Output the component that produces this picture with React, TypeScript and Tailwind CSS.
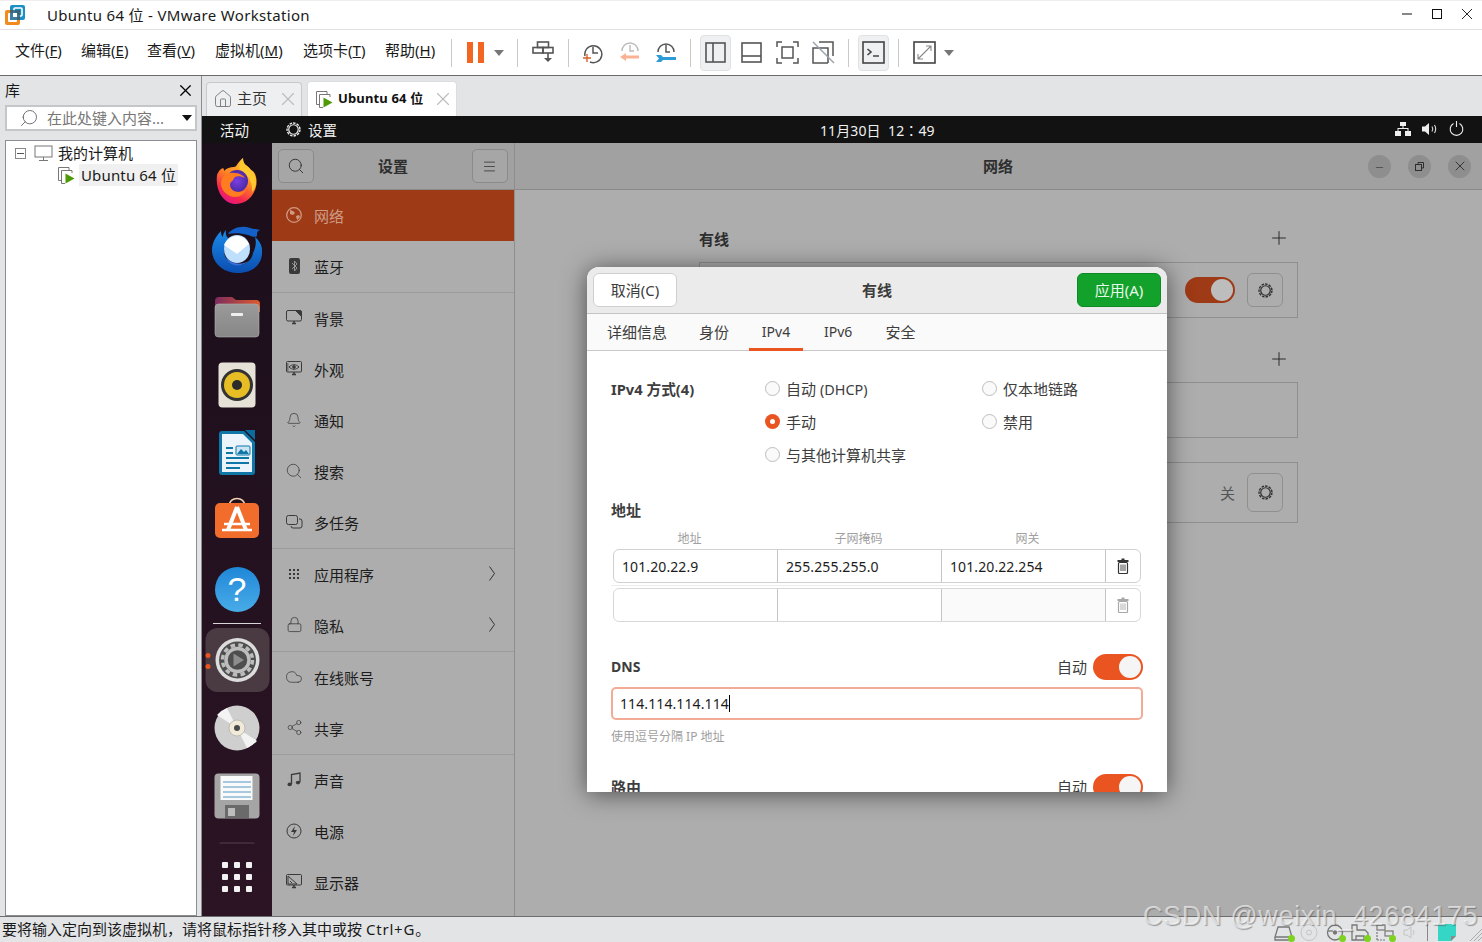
import React from "react";
import { Search, Menu, X, Plus, Bell, Lock, Cloud, Share2, Home, Minus } from "lucide-react";

const Sep = () => <div className="w-px h-7 bg-[#c9c9c9] shrink-0" />;
const Caret = ({ c = "#777" }: { c?: string }) => (
  <svg width="10" height="6" viewBox="0 0 10 6"><path d="M0 0h10L5 6z" fill={c} /></svg>
);

const S = "#555";
const VmIcon = () => (
  <svg width="19" height="19" viewBox="0 0 19 19" fill="none" className="shrink-0">
    <path d="M5 14.5H1.5V1.5H12V4" stroke="#777" strokeWidth="1" />
    <path d="M8 17.5H4.5V4.5H15V7" stroke="#777" strokeWidth="1" />
    <path d="M8.5 7.5v10l9-5z" fill="#4e9a06" />
  </svg>
);

const Tool = ({ children, on }: { children: React.ReactNode; on?: boolean }) => (
  <div className={`w-[31px] h-9 flex items-center justify-center rounded-[4px] shrink-0 ${on ? "bg-[#eef0f2] border border-[#dfe1e3]" : ""}`}>{children}</div>
);

const GearLine = ({ s = 20, c = "#333" }: { s?: number; c?: string }) => (
  <svg width={s} height={s} viewBox="0 0 20 20" fill="none">
    <circle cx="10" cy="10" r="5.6" stroke={c} strokeWidth="1.4" />
    <circle cx="10" cy="10" r="7.6" stroke={c} strokeWidth="1.6" strokeDasharray="3 1.3" />
  </svg>
);

function MenuItem({ a, k, w }: { a: string; k: string; w: string }) {
  return <span className={`whitespace-nowrap ${w}`}>{a}(<u>{k}</u>)</span>;
}

function TopBars() {
  return (
    <>
      <div className="h-[30px] bg-white border-t border-[#eeeeee] border-b border-b-[#e2e2e2] flex items-center pl-[5px] pr-[10px] shrink-0">
        <svg width="20" height="20" viewBox="0 0 20 20" fill="none">
          <rect x="5" y="0" width="15" height="15" rx="2" fill="#1c8fc4" />
          <rect x="0" y="5" width="15" height="15" rx="2" fill="#f28a1d" />
          <rect x="3" y="8" width="9" height="9" rx="1" fill="#fff" />
          <rect x="9" y="3" width="8" height="8" rx="1" fill="none" stroke="#fff" strokeWidth="1.6" />
          <rect x="5" y="5" width="10" height="10" fill="#0c5d8c" opacity="0.8" />
          <rect x="8" y="8" width="4" height="4" fill="#fff" />
        </svg>
        <span className="ml-[22px] text-[15px] text-[#1a1a1a] tracking-[0.32px]">Ubuntu 64 位 - VMware Workstation</span>
        <div className="ml-auto flex items-center gap-[20px] text-black -mt-[2px]">
          <svg width="10" height="10" viewBox="0 0 10 10"><path d="M0 5h10" stroke="#111" strokeWidth="1" /></svg>
          <svg width="10" height="10" viewBox="0 0 10 10"><rect x="0.5" y="0.5" width="9" height="9" fill="none" stroke="#111" /></svg>
          <svg width="10" height="10" viewBox="0 0 10 10"><path d="M0 0l10 10M10 0L0 10" stroke="#111" strokeWidth="0.9" /></svg>
        </div>
      </div>
      <div className="h-[46px] bg-white border-b border-[#6b6b6b] flex items-center pl-[15px] shrink-0 text-[15px] text-[#1a1a1a]">
        <div className="flex gap-[18px] -mt-[5px]">
          <MenuItem a="文件" k="F" w="w-[48px]" />
          <MenuItem a="编辑" k="E" w="w-[48px]" />
          <MenuItem a="查看" k="V" w="w-[50px]" />
          <MenuItem a="虚拟机" k="M" w="w-[70px]" />
          <MenuItem a="选项卡" k="T" w="w-[64px]" />
          <MenuItem a="帮助" k="H" w="w-[52px]" />
        </div>
        <div className="ml-[14px]"><Sep /></div>
        <div className="ml-[15px] flex gap-[5px]">
          <div className="w-[6px] h-[21px] bg-[#f26522]" /><div className="w-[6px] h-[21px] bg-[#f26522]" />
        </div>
        <div className="ml-[10px]"><Caret /></div>
        <div className="ml-[13px]"><Sep /></div>
        <svg className="ml-[14px]" width="22" height="24" viewBox="0 0 22 24" fill="none" stroke={S} strokeWidth="1.6">
          <rect x="5.5" y="1" width="11" height="5.5" /><rect x="1" y="6.5" width="10" height="5.5" /><rect x="11" y="6.5" width="10" height="5.5" />
          <path d="M16 12v7" /><path d="M12 17h8l-4 4z" fill={S} stroke="none" />
        </svg>
        <div className="ml-[14px]"><Sep /></div>
        <svg className="ml-[13px]" width="21" height="22" viewBox="0 0 21 22" fill="none">
          <path d="M3 14a8.5 8.5 0 1 1 5 6" stroke={S} strokeWidth="1.5" /><path d="M11 5v6h5" stroke={S} strokeWidth="1.5" />
          <path d="M1 16h8M5 12v8" stroke="#d9622b" strokeWidth="1.4" />
        </svg>
        <svg className="ml-[16px]" width="21" height="22" viewBox="0 0 21 22" fill="none">
          <path d="M3 9a8 8 0 0 1 16 0" stroke="#bbb" strokeWidth="1.4" /><path d="M11 3v6h4" stroke="#bbb" strokeWidth="1.4" />
          <path d="M1 15l6-4v2.500h13v3H7V19z" fill="#f9b394" />
        </svg>
        <svg className="ml-[15px]" width="22" height="22" viewBox="0 0 22 22" fill="none">
          <path d="M3 10a8 8 0 0 1 16 0" stroke={S} strokeWidth="1.5" /><path d="M11 3v7h4" stroke={S} strokeWidth="1.5" />
          <path d="M1 13h5l2 2h13v3H8l-2 2H1l3-3.500z" fill="#2e9bd9" />
        </svg>
        <div className="ml-[13px]"><Sep /></div>
        <div className="ml-[9px]"><Tool on><svg width="21" height="21" viewBox="0 0 21 21" fill="none" stroke={S} strokeWidth="1.6"><rect x="1" y="1" width="19" height="19" /><path d="M8 1v19" /></svg></Tool></div>
        <div className="ml-[5px]"><Tool><svg width="21" height="21" viewBox="0 0 21 21" fill="none" stroke={S} strokeWidth="1.6"><rect x="1" y="1" width="19" height="19" /><path d="M1 14h19" /></svg></Tool></div>
        <div className="ml-[5px]"><Tool><svg width="23" height="23" viewBox="0 0 23 23" fill="none" stroke={S} strokeWidth="1.5"><path d="M1 6V1h5M17 1h5v5M22 17v5h-5M6 22H1v-5" /><rect x="6" y="6" width="11" height="11" /></svg></Tool></div>
        <div className="ml-[5px]"><Tool><svg width="23" height="23" viewBox="0 0 23 23" fill="none" stroke={S} strokeWidth="1.5"><path d="M7 1h14v14M16 22H1V7h15v15" /><path d="M1 1l21 21" stroke="#9aa3ad" /></svg></Tool></div>
        <div className="ml-[9px]"><Sep /></div>
        <div className="ml-[9px]"><Tool on><svg width="23" height="23" viewBox="0 0 23 23" fill="none" stroke="#444" strokeWidth="1.6"><rect x="1" y="1" width="21" height="21" /><path d="M5.500 8l3.500 3-3.500 3M11 15h6" /></svg></Tool></div>
        <div className="ml-[9px]"><Sep /></div>
        <div className="ml-[10px]"><Tool><svg width="23" height="23" viewBox="0 0 23 23" fill="none"><rect x="1" y="1" width="21" height="21" stroke="#444" strokeWidth="1.6" /><path d="M5 18L18 5M13 5h5v5M5 13v5h5" stroke="#888" strokeWidth="1.1" /></svg></Tool></div>
        <div className="ml-[4px]"><Caret /></div>
      </div>
    </>
  );
}

function Library() {
  return (
    <div className="w-[201px] shrink-0 flex flex-col pl-[5px] pr-[4px] bg-[#e3e4e6]">
      <div className="h-[29px] flex items-center justify-between text-[15px] text-[#1a1a1a] pr-[2px] shrink-0">
        <span>库</span><X size={19} strokeWidth={1.5} className="text-black" />
      </div>
      <div className="h-[26px] bg-white border-2 border-[#c5c6c8] flex items-center pl-[12px] pr-[3px] text-[15px] text-[#777] shrink-0">
        <Search size={20} strokeWidth={1.1} className="-scale-x-100 text-[#666] shrink-0" />
        <span className="ml-[8px] whitespace-nowrap">在此处键入内容...</span>
        <span className="ml-auto"><Caret c="#111" /></span>
      </div>
      <div className="mt-[9px] flex-1 bg-white border border-[#8b8d92] pt-px text-[15px] text-[#1a1a1a]">
        <div className="h-[22px] flex items-center pl-[9px]">
          <span className="w-[11px] h-[11px] border border-[#888] flex items-center justify-center"><span className="w-[7px] h-px bg-[#555]" /></span>
          <svg className="ml-[8px]" width="19" height="17" viewBox="0 0 19 17" fill="none" stroke="#777"><rect x="1" y="1" width="17" height="11" /><path d="M9.500 12v3M5 15.500h9" /></svg>
          <span className="ml-[5px]">我的计算机</span>
        </div>
        <div className="h-[22px] flex items-center pl-[51px]">
          <VmIcon />
          <span className="ml-[3px] bg-[#f0f0f0] px-[2px] h-[22px] leading-[22px] whitespace-nowrap tracking-[0.15px]">Ubuntu 64 位</span>
        </div>
      </div>
    </div>
  );
}

function Tabs() {
  return (
    <div className="h-[40px] bg-[#e3e4e6] flex items-end pl-[4px] gap-[5px] shrink-0">
      <div className="w-[96px] h-[34px] bg-[#eeeff1] border border-b-0 border-[#c8c9cc] rounded-t-[4px] flex items-center pl-[6px] text-[15px] text-[#333] shrink-0 pb-[2px]">
        <Home size={20} strokeWidth={1.1} className="text-[#777] shrink-0" />
        <span className="ml-[4px]">主页</span>
        <X size={22} strokeWidth={1.2} className="ml-auto mr-[2px] text-[#bbb] shrink-0" />
      </div>
      <div className="w-[150px] h-[35px] bg-white border border-b-0 border-[#dcdde0] rounded-t-[4px] flex items-center pl-[7px] text-[13px] font-bold text-[#111] shrink-0">
        <VmIcon />
        <span className="ml-[4px] whitespace-nowrap tracking-[0.15px]">Ubuntu 64 位</span>
        <X size={22} strokeWidth={1.2} className="ml-auto mr-[2px] text-[#bbb] shrink-0" />
      </div>
    </div>
  );
}

function GnomeBar() {
  return (
    <div className="h-[27px] bg-[#121212] text-[#f0f0f0] text-[14.500px] flex items-center relative shrink-0 pl-[18px] pr-[18px] pt-[2px]">
      <span>活动</span>
      <span className="ml-[36px] text-white -mt-[3px]"><GearLine s={17} c="#eee" /></span>
      <span className="ml-[6px]">设置</span>
      <span className="ml-[483px] text-[14px] whitespace-nowrap tracking-[0.1px]">11月30日&nbsp;&nbsp;12<span className="[font-family:'Noto_Sans_CJK_TC',sans-serif]">：</span>49</span>
      <div className="ml-auto flex items-center gap-[11px] -mt-[4px]">
        <svg width="16" height="14" viewBox="0 0 16 14" fill="#eee"><rect x="5" y="0" width="6" height="4" /><rect x="0" y="9" width="6" height="5" /><rect x="10" y="9" width="6" height="5" /><path d="M7.500 4h1v2H13.500v3h-1V7h-9v2h-1V6h5z" /></svg>
        <svg width="16" height="14" viewBox="0 0 16 14" fill="none"><path d="M0 4.500h3L7 1v12L3 9.500H0z" fill="#eee" /><path d="M10 4.500c1 1.500 1 3.500 0 5M12.500 3c1.500 2.500 1.500 5.500 0 8" stroke="#ddd" strokeWidth="1.1" /></svg>
        <svg width="15" height="15" viewBox="0 0 15 15" fill="none" stroke="#eee" strokeWidth="1.1"><path d="M4.500 2.500a6.300 6.300 0 1 0 6 0M7.500 0v6" /></svg>
      </div>
    </div>
  );
}

const Firefox = () => (
  <svg width="44" height="46" viewBox="0 0 44 46">
    <defs>
      <linearGradient id="ff1" x1="0.8" y1="0" x2="0.3" y2="1"><stop offset="0" stopColor="#ffd43a" /><stop offset="0.45" stopColor="#ff8a22" /><stop offset="0.8" stopColor="#f5274e" /><stop offset="1" stopColor="#e31587" /></linearGradient>
      <radialGradient id="ff2"><stop offset="0" stopColor="#7b3fe0" /><stop offset="1" stopColor="#4a2aa8" /></radialGradient>
    </defs>
    <path d="M2 17c2-5 4-6 6-7 1 1 1 2 1 3 3-3 6-4 10-4 3 0 2-3 9-9 0 4 1 6 4 8 2 1 3 3 3 4 3 0 5 3 6 7 3 12-6 27-20 27C9 46 0 33 2 17z" fill="url(#ff1)" />
    <path d="M28 0c0 4 1 6 4 8 4 3 9 9 9 16 0 4-2 8-4 10 1-8-3-17-11-21-3-2-2-8 2-13z" fill="#ffc82e" />
    <circle cx="22" cy="23" r="11" fill="url(#ff2)" />
    <path d="M8 19c3-4 8-5 12-4 4 0 8 2 10 5-4-2-8-2-10-1-2 2-1 3-4 5-2 2-1 7 3 9 5 2 10 1 12-2-1 6-9 10-16 7-9-4-11-13-7-19z" fill="#ff7c1f" />
  </svg>
);

const Thunderbird = () => (
  <svg width="50" height="48" viewBox="0 0 50 48">
    <defs><linearGradient id="tb1" x1="0.5" y1="0" x2="0.5" y2="1"><stop offset="0" stopColor="#1a8be8" /><stop offset="1" stopColor="#0b4db0" /></linearGradient></defs>
    <path d="M14 5c-1 5 1 8 4 9-4 3-6 7-6 12 0 8 7 14 15 14 7 0 13-5 14-12 2-4 4-10 2-16 5 4 8 10 7 17-1 12-11 19-24 19C11 48 0 38 0 25 0 17 5 10 9 6c0 4 1 5 2 6 0-3 1-5 3-7z" fill="url(#tb1)" />
    <path d="M16 9c4-6 14-9 22-6 3 1 7 1 10 2-3 1-3 3-3 6-2 2-6 0-9-1-7-2-14-2-20-1z" fill="#1260c8" />
    <ellipse cx="25" cy="24" rx="13" ry="14" fill="#bfdfff" />
    <path d="M12 20l13 9 12-10c-3-6-8-8-12-8-6 0-11 4-13 9z" fill="#fff" />
    <path d="M14 33c6 6 16 8 24 2-8 8-20 7-24-2z" fill="#3c6fd8" />
  </svg>
);

const Files = () => (
  <svg width="46" height="42" viewBox="0 0 46 42">
    <defs><linearGradient id="fo1" x1="0" x2="1" y1="0" y2="0"><stop offset="0" stopColor="#7c2c5e" /><stop offset="1" stopColor="#dd5a2c" /></linearGradient>
      <linearGradient id="fo2" x1="0" x2="0" y1="0" y2="1"><stop offset="0" stopColor="#9a9a9a" /><stop offset="1" stopColor="#878787" /></linearGradient></defs>
    <path d="M1 5a4 4 0 0 1 4-4h13l4 3h20a4 4 0 0 1 4 4v8H1z" fill="url(#fo1)" />
    <rect x="1" y="8" width="44" height="33" rx="3.500" fill="url(#fo2)" stroke="#b3b3b3" strokeWidth="0.6" />
    <rect x="17" y="17" width="12" height="3" rx="0.800" fill="#efefef" />
  </svg>
);

const Rhythmbox = () => (
  <svg width="38" height="46" viewBox="0 0 38 46">
    <rect x="0.500" y="0.500" width="37" height="45" rx="4" fill="#e6e2d8" />
    <circle cx="19" cy="23" r="16" fill="#333" />
    <circle cx="19" cy="23" r="13" fill="#e6bd25" />
    <circle cx="19" cy="23" r="5" fill="#2b2b2b" />
  </svg>
);

const Writer = () => (
  <svg width="38" height="46" viewBox="0 0 38 46">
    <path d="M27 0l10 0v10z" fill="#0d6c9f" />
    <path d="M4 1h22l11 11v30a3 3 0 0 1-3 3H4a3 3 0 0 1-3-3V4a3 3 0 0 1 3-3z" fill="#0f77a8" />
    <path d="M4 4h21l9 9v29H4z" fill="#eaf4fa" />
    <path d="M8 17h7v2H8zM8 22h7v2H8zM8 27h23v2H8zM8 32h23v2H8zM8 37h14v2H8z" fill="#0f77a8" />
    <rect x="18" y="16" width="14" height="9" rx="1" fill="#cfe4f2" stroke="#0f77a8" />
    <path d="M19 24l4-5 3 3 2-2 3 4z" fill="#0f77a8" />
  </svg>
);

const Store = () => (
  <svg width="46" height="41" viewBox="0 0 46 41" fill="none" className="-mt-[7px]">
    <path d="M15 9c0-10 16-10 16 0" stroke="#f2d3b0" strokeWidth="1.6" />
    <rect x="1" y="6" width="44" height="35" rx="5" fill="#f26c2c" />
    <path d="M23 10L14 33M23 10l9 23" stroke="#fff" strokeWidth="4" />
    <path d="M10 27h26M8 33h30" stroke="#fff" strokeWidth="2.500" />
  </svg>
);

const SettingsIcon = () => (
  <svg width="46" height="46" viewBox="0 0 46 46" fill="none">
    <circle cx="23" cy="23" r="22" fill="#dcdcdc" />
    <circle cx="23" cy="23" r="18.500" fill="#4e4e4e" />
    <circle cx="23" cy="23" r="11.500" stroke="#bdbdbd" strokeWidth="3.500" />
    <circle cx="23" cy="23" r="15" stroke="#bdbdbd" strokeWidth="3.500" strokeDasharray="4.500 3.400" />
    <path d="M19 16.500v13l10.500-6.500z" fill="#8d8d8d" />
  </svg>
);

const Disc = () => (
  <svg width="46" height="46" viewBox="0 0 46 46">
    <circle cx="23" cy="23" r="22.500" fill="#cfcfcf" />
    <path d="M23 23L3 10a24 24 0 0 1 10-7zM23 23l20 13a24 24 0 0 1-10 7z" fill="#f3f3f3" />
    <circle cx="23" cy="23" r="8" fill="#f1ead9" stroke="#aaa" strokeWidth="0.700" />
    <circle cx="23" cy="23" r="3" fill="#4a4a4a" />
  </svg>
);

const Floppy = () => (
  <svg width="46" height="46" viewBox="0 0 46 46">
    <rect x="0.500" y="0.500" width="45" height="45" rx="4" fill="#a5a5a5" />
    <rect x="6.500" y="3" width="32" height="24" fill="#fafafa" />
    <path d="M9 9h28M9 14h28M9 19h28M9 24h28" stroke="#2a7fb8" strokeWidth="0.800" />
    <path d="M11 45V32h24v13z" fill="#6a6a6a" />
    <rect x="14" y="35" width="7" height="8" fill="#bdbdbd" />
  </svg>
);

const Slot = ({ children, h = "h-[68px]" }: { children: React.ReactNode; h?: string }) => (
  <div className={`${h} w-full flex items-center justify-center shrink-0`}>{children}</div>
);

function Dock() {
  return (
    <div className="w-[70px] shrink-0 bg-gradient-to-b from-[#1a0e1a] to-[#2c1424] pt-[4px] flex flex-col items-center overflow-hidden">
      <Slot><Firefox /></Slot>
      <Slot><Thunderbird /></Slot>
      <Slot><Files /></Slot>
      <Slot><Rhythmbox /></Slot>
      <Slot><Writer /></Slot>
      <Slot><Store /></Slot>
      <Slot>
        <div className="w-[45px] h-[45px] rounded-full bg-gradient-to-b from-[#1f87d8] to-[#48ace8] flex items-center justify-center text-white text-[34px] [font-family:'Liberation_Sans',sans-serif]">?</div>
      </Slot>
      <div className="h-[3px] w-full flex justify-center shrink-0"><div className="w-[48px] h-px bg-[#d8d4d8]" /></div>
      <div className="relative w-[64px] h-[64px] my-[2px] rounded-[12px] bg-[#4a3a42] flex items-center justify-center shrink-0 ml-[3px] -translate-x-[1.500px]">
        <SettingsIcon />
        <span className="absolute left-0 top-[25px] w-[5px] h-[5px] rounded-full bg-[#e95420]" />
        <span className="absolute left-0 top-[36px] w-[5px] h-[5px] rounded-full bg-[#e95420]" />
      </div>
      <Slot><Disc /></Slot>
      <Slot><Floppy /></Slot>
      <div className="h-[2px] w-[36px] bg-[#3e2a38] rounded-t mt-[12px] shrink-0" />
      <div className="mt-[18px] grid grid-cols-3 gap-[6px] shrink-0">
        {Array.from({ length: 9 }).map((_, i) => <span key={i} className="w-[6px] h-[6px] rounded-[1px] bg-[#f2f2f2]" />)}
      </div>
    </div>
  );
}

const ic = "#3a3a3a";
const side: Record<string, React.ReactNode> = {
  net: <svg width="16" height="16" viewBox="0 0 16 16"><circle cx="8" cy="8" r="7.300" fill="none" stroke="#d29a84" strokeWidth="1.300" /><path d="M4 3l3 1 2 2-2 2-3-1zM10 9l3-1 1 2-3 3z" fill="#d29a84" /></svg>,
  bt: <svg width="11" height="16" viewBox="0 0 11 16"><rect width="11" height="16" rx="2" fill={ic} /><path d="M3 5l5 5-2.500 3V3L8 6l-5 5" fill="none" stroke="#aaa" strokeWidth="0.800" /></svg>,
  bg: <svg width="16" height="15" viewBox="0 0 16 15" fill="none" stroke={ic}><rect x="0.500" y="0.500" width="15" height="10.500" rx="1.500" /><path d="M6 13.500h4M8 11v2" strokeWidth="1.500" /><path d="M10 1h5v5z" fill={ic} /></svg>,
  look: <svg width="16" height="15" viewBox="0 0 16 15" fill="none" stroke={ic}><rect x="0.500" y="0.500" width="15" height="10.500" rx="1" /><path d="M6 13.500h4M8 11v2" strokeWidth="1.500" /><path d="M3 6c3-3 7-3 10 0-3 3-7 3-10 0z" /><circle cx="8" cy="6" r="1.300" fill={ic} /><path d="M0.500 3h2M0.500 5h2M0.500 7h2M0.500 9h2" /></svg>,
  grid: <svg width="12" height="12" viewBox="0 0 12 12" fill={ic}>{[1, 5, 9].flatMap((x) => [1, 5, 9].map((y) => <rect key={`${x}${y}`} x={x} y={y} width="2" height="2" />))}</svg>,
  multi: <svg width="17" height="14" viewBox="0 0 17 14" fill="none" stroke={ic}><rect x="0.500" y="0.500" width="11" height="9" rx="2" /><path d="M13 4h1a2 2 0 0 1 2 2v5a2 2 0 0 1-2 2H7a2 2 0 0 1-2-2" /></svg>,
  power: <svg width="16" height="16" viewBox="0 0 16 16" fill="none"><circle cx="8" cy="8" r="7" stroke={ic} /><path d="M9 3L5 9h3l-1 4 4-6H8z" fill={ic} /></svg>,
  disp: <svg width="16" height="15" viewBox="0 0 16 15" fill="none" stroke={ic}><rect x="0.500" y="0.500" width="15" height="10.500" rx="1" /><path d="M6 13.500h4M8 11v2" strokeWidth="1.500" /><path d="M2 2l9 8H2zM4 7l2 2" /></svg>,
  music: <svg width="14" height="15" viewBox="0 0 14 15" fill="none"><path d="M4.500 12V2.500L13 1v9" stroke={ic} strokeWidth="1.300" /><ellipse cx="2.700" cy="12.400" rx="2.200" ry="1.800" fill={ic} /><ellipse cx="11" cy="10.600" rx="2.200" ry="1.800" fill={ic} /></svg>,
};

const Chevron = () => (
  <svg width="6" height="15" viewBox="0 0 6 15" fill="none" stroke="#333"><path d="M0.500 0.500L5.500 7.500 0.500 14.500" /></svg>
);

function Row({ icon, label, arrow, active }: { icon: React.ReactNode; label: string; arrow?: boolean; active?: boolean }) {
  return (
    <div className={`h-[51px] flex items-center pl-[14px] pr-[19px] pt-[2px] shrink-0 text-[15px] ${active ? "bg-[#9e3a16] text-[#cf9c88]" : "text-[#1c1c1c]"}`}>
      <span className="w-[16px] h-[18px] flex items-center justify-center -mt-[4px] [&>svg]:shrink-0">{icon}</span>
      <span className="ml-[12px]">{label}</span>
      {arrow && <span className="ml-auto -mt-[4px]"><Chevron /></span>}
    </div>
  );
}
const HR = () => <div className="h-px bg-[#9c9c9c] shrink-0" />;

function Sidebar() {
  return (
    <div className="w-[243px] shrink-0 bg-[#adadad] border-r border-[#8e8e8e] flex flex-col overflow-hidden">
      <div className="h-[47px] bg-[#a1a1a1] border-b border-[#8a8a8a] flex items-center justify-between px-[6px] shrink-0">
        <div className="w-[36px] h-[34px] rounded-[5px] border border-[#8a8a8a] bg-[#a6a6a6] flex items-center justify-center"><Search size={18} strokeWidth={1.2} className="text-[#2e2e2e]" /></div>
        <span className="text-[15px] font-bold text-[#2e2e2e]">设置</span>
        <div className="w-[36px] h-[34px] rounded-[5px] border border-[#8a8a8a] bg-[#a6a6a6] flex items-center justify-center"><Menu size={15} strokeWidth={1.2} className="text-[#2e2e2e]" /></div>
      </div>
      <Row active icon={side.net} label="网络" />
      <Row icon={side.bt} label="蓝牙" />
      <HR />
      <Row icon={side.bg} label="背景" />
      <Row icon={side.look} label="外观" />
      <Row icon={<Bell size={16} strokeWidth={1.1} color={ic} />} label="通知" />
      <Row icon={<Search size={18} strokeWidth={1} color={ic} />} label="搜索" />
      <Row icon={side.multi} label="多任务" />
      <HR />
      <Row icon={side.grid} label="应用程序" arrow />
      <Row icon={<Lock size={17} strokeWidth={1.1} color={ic} />} label="隐私" arrow />
      <HR />
      <Row icon={<Cloud size={18} strokeWidth={1} color={ic} />} label="在线账号" />
      <Row icon={<Share2 size={17} strokeWidth={1} color={ic} />} label="共享" />
      <HR />
      <Row icon={side.music} label="声音" />
      <Row icon={side.power} label="电源" />
      <Row icon={side.disp} label="显示器" />
    </div>
  );
}

const Toggle = ({ c = "bg-[#e95420]", t = "bg-[#f5f5f5]" }: { c?: string; t?: string }) => (
  <div className={`w-[50px] h-[26px] rounded-full ${c} flex items-center justify-end pr-[2px] shrink-0`}>
    <div className={`w-[22px] h-[22px] rounded-full ${t}`} />
  </div>
);

const TrashIcon = ({ c }: { c: string }) => (
  <svg width="12" height="16" viewBox="0 0 12 16" fill="none" stroke={c}>
    <path d="M4.500 1.500h3M0.500 3h11" strokeWidth="1.800" />
    <rect x="1.500" y="4.500" width="9" height="11" rx="1" strokeWidth="1.200" />
    <path d="M4 6.500v6.500M6 6.500v6.500M8 6.500v6.500" strokeWidth="0.900" />
  </svg>
);

function MainDim() {
  const WinBtn = ({ children }: { children: React.ReactNode }) => (
    <div className="w-[23px] h-[23px] rounded-full bg-[#8e8e8e] flex items-center justify-center">{children}</div>
  );
  const GearBtn = ({ h }: { h: string }) => (
    <div className={`w-[36px] ${h} rounded-[6px] border border-[#8f8f8f] flex items-center justify-center`}><GearLine s={17} c="#2e2e2e" /></div>
  );
  return (
    <div className="flex-1 bg-[#adadad] flex flex-col min-w-0">
      <div className="h-[47px] bg-[#a1a1a1] border-b border-[#8a8a8a] flex items-center shrink-0 relative">
        <span className="ml-[468px] text-[15px] font-bold text-[#2e2e2e]">网络</span>
        <div className="ml-auto mr-[11px] flex gap-[17px]">
          <WinBtn><Minus size={11} strokeWidth={1.3} color="#2e2e2e" className="mt-[3px]" /></WinBtn>
          <WinBtn><svg width="9" height="9" viewBox="0 0 9 9" fill="none" stroke="#2e2e2e"><rect x="0.500" y="2.500" width="6" height="6" /><path d="M3 2.500V0.500h5.500v5.500h-2" /></svg></WinBtn>
          <WinBtn><X size={16} strokeWidth={1.4} color="#2e2e2e" /></WinBtn>
        </div>
      </div>
      <div className="pl-[184px] w-[783px] flex flex-col">
        <div className="h-[72px] flex items-end pb-[12px] pr-[8px] justify-between">
          <span className="text-[15px] font-bold text-[#2e2e2e]">有线</span>
          <Plus size={22} strokeWidth={1} color="#222" className="mb-[1px]" />
        </div>
        <div className="h-[56px] border border-[#8f8f8f] flex items-center justify-end pr-[14px] gap-[12px]">
          <Toggle c="bg-[#9e3a16]" t="bg-[#bdbdbd]" />
          <GearBtn h="h-[34px]" />
        </div>
        <div className="h-[64px] flex items-center justify-end pr-[8px] pt-[17px]"><Plus size={22} strokeWidth={1} color="#222" /></div>
        <div className="h-[56px] border border-[#8f8f8f]" />
        <div className="mt-[24px] h-[61px] border border-[#8f8f8f] flex items-center justify-end pr-[14px] gap-[12px] text-[15px] text-[#555]">
          <span className="mt-[1px]">关</span>
          <GearBtn h="h-[39px]" />
        </div>
      </div>
    </div>
  );
}

const Radio = ({ on, label }: { on?: boolean; label: React.ReactNode }) => (
  <div className="h-[33px] flex items-center text-[#3d3d3d] text-[15px] whitespace-nowrap">
    {on ? (
      <span className="w-[15px] h-[15px] -mt-[3px] rounded-full bg-[#e95420] flex items-center justify-center shrink-0"><span className="w-[5px] h-[5px] rounded-full bg-white" /></span>
    ) : (
      <span className="w-[15px] h-[15px] -mt-[3px] rounded-full border border-[#bdbdbd] bg-[#fafafa] shrink-0" />
    )}
    <span className="ml-[6px]">{label}</span>
  </div>
);

function Dialog() {
  const cell = "flex items-center pl-[8px] border-r border-[#c4c4c4] text-[14px] tracking-[0.1px] text-[#1c1c1c]";
  return (
    <div className="absolute left-[587px] top-[267px] w-[580px] h-[525px] rounded-t-[12px] overflow-hidden bg-white flex flex-col shadow-[0_2px_24px_rgba(0,0,0,0.55)]">
      <div className="h-[47px] bg-[#ebebeb] border-b border-[#c4c4c4] shrink-0 flex items-center justify-between px-[6px] text-[15px]">
        <div className="w-[84px] h-[34px] bg-white border border-[#cfcfcf] rounded-[6px] flex items-center justify-center text-[#3d3d3d]">取消(C)</div>
        <span className="font-bold text-[#3d3d3d]">有线</span>
        <div className="w-[84px] h-[34px] bg-[#12a22c] border border-[#0e8a24] rounded-[6px] flex items-center justify-center text-[#e8f7ea]">应用(A)</div>
      </div>
      <div className="h-[37px] bg-[#fafafa] border-b border-[#c9c9c9] shrink-0 flex text-[15px] text-[#3d3d3d]">
        <div className="ml-[20px] leading-[36px]">详细信息</div>
        <div className="ml-[32px] leading-[36px]">身份</div>
        <div className="ml-[20px] w-[54px] h-[37px] border-b-[3px] border-[#e95420] text-center leading-[36px] text-[14px]">IPv4</div>
        <div className="ml-[21px] leading-[36px] text-[14px]">IPv6</div>
        <div className="ml-[33px] leading-[36px]">安全</div>
      </div>
      <div className="px-[24px] flex-1 overflow-hidden">
        <div className="pt-[22px] flex">
          <div className="w-[154px] text-[14.700px] font-bold text-[#3d3d3d] leading-[33px] whitespace-nowrap">IPv4 方式(4)</div>
          <div className="w-[217px]">
            <Radio label={<>自动 <span className="text-[14.400px]">(DHCP)</span></>} />
            <Radio on label="手动" />
            <Radio label="与其他计算机共享" />
          </div>
          <div>
            <Radio label="仅本地链路" />
            <Radio label="禁用" />
          </div>
        </div>
        <div className="mt-[26px] text-[15px] font-bold text-[#3d3d3d] leading-[24px]">地址</div>
        <div className="mt-[10px] -ml-[6px] w-[507px] grid grid-cols-[169px_169px_169px] text-[12px] text-[#a0a0a0] text-center h-[14px] leading-[14px]">
          <span>地址</span><span>子网掩码</span><span>网关</span>
        </div>
        <div className="mt-[3px] ml-[2px] w-[528px] h-[34px] border border-[#d0d0d0] rounded-[6px] grid grid-cols-[164px_164px_164px_1fr]">
          <div className={cell}>101.20.22.9</div>
          <div className={cell}>255.255.255.0</div>
          <div className={cell}>101.20.22.254</div>
          <div className="flex items-center justify-center"><TrashIcon c="#333" /></div>
        </div>
        <div className="h-px my-[2px] bg-[#ececec] w-[530px]" />
        <div className="ml-[2px] w-[528px] h-[34px] border border-[#d8d8d8] rounded-[6px] grid grid-cols-[164px_164px_164px_1fr]">
          <div className={cell} />
          <div className={cell} />
          <div className={`${cell} bg-[#fafafa]`} />
          <div className="flex items-center justify-center"><TrashIcon c="#a8a8a8" /></div>
        </div>
        <div className="mt-[32px] h-[26px] flex items-center justify-between w-[532px]">
          <span className="text-[14px] font-bold text-[#3d3d3d] -mt-[1px]">DNS</span>
          <span className="flex items-center gap-[6px] text-[15px] text-[#3d3d3d]">自动<Toggle /></span>
        </div>
        <div className="mt-[7px] w-[532px] h-[33px] border-2 border-[#f4ab96] rounded-[5px] flex items-center pl-[7px] text-[14px] tracking-[0.1px] text-[#1c1c1c]">
          <span>114.114.114.114</span><span className="w-px h-[17px] bg-black" />
        </div>
        <div className="mt-[9px] text-[12px] text-[#a0a0a0] leading-[16px]">使用逗号分隔 IP 地址</div>
        <div className="mt-[29px] h-[26px] flex items-center justify-between w-[532px]">
          <span className="text-[15px] font-bold text-[#3d3d3d]">路由</span>
          <span className="flex items-center gap-[6px] text-[15px] text-[#3d3d3d]">自动<Toggle /></span>
        </div>
      </div>
    </div>
  );
}

function StatusBar() {
  const Dot = () => <span className="absolute -right-[2px] -bottom-[1px] w-[7px] h-[7px] rounded-full bg-[#7ed321]" />;
  const g = "#777";
  return (
    <div className="h-[25px] bg-[#e3e4e6] flex items-center pl-[2px] text-[15px] text-[#1a1a1a] shrink-0">
      <span className="whitespace-nowrap">要将输入定向到该虚拟机，请将鼠标指针移入其中或按 <span className="tracking-[0.8px]">Ctrl+G。</span></span>
      <div className="ml-auto flex items-center gap-[7px] mt-[6px]">
        <span className="relative"><svg width="19" height="16" viewBox="0 0 19 16" fill="none" stroke={g} strokeWidth="1.300"><path d="M4 2h11l3 10H1zM1 12v3h17v-3" /></svg><Dot /></span>
        <svg width="18" height="17" viewBox="0 0 18 17" fill="none" stroke="#c4c4c4"><circle cx="9" cy="8.500" r="8" /><circle cx="9" cy="8.500" r="2.500" /></svg>
        <span className="relative ml-[1px]"><svg width="18" height="17" viewBox="0 0 18 17" fill="none" stroke={g} strokeWidth="1.300"><circle cx="9" cy="8.500" r="7.500" /><circle cx="9" cy="8.500" r="1.500" fill={g} /><path d="M2 7h5" /></svg><Dot /></span>
        <span className="relative"><svg width="18" height="17" viewBox="0 0 18 17" fill="none" stroke={g} strokeWidth="1.300"><path d="M1 1h5v5h8l3 3v7H1zM5 16v-4h8v4" /></svg><Dot /></span>
        <span className="relative"><svg width="18" height="17" viewBox="0 0 18 17" fill="none" stroke={g} strokeWidth="1.200" strokeDasharray="2 1"><rect x="1" y="1" width="8" height="5" strokeDasharray="none" /><rect x="9" y="7" width="8" height="5" strokeDasharray="none" /><path d="M1 16V7M1 16h8" /></svg><Dot /></span>
        <svg className="ml-[2px]" width="14" height="15" viewBox="0 0 14 15" fill="none" stroke="#c4c4c4"><path d="M1 5h3l4-3v11l-4-3H1zM10 5c1 1.500 1 3.500 0 5" /></svg>
        <span className="w-px h-[17px] bg-[#888] ml-[3px]" />
        <svg className="ml-[3px]" width="18" height="17" viewBox="0 0 18 17"><path d="M0 0h18v12l-5 5H0z" fill="#35d6c6" /><path d="M13 17v-5h5z" fill="#8a8a8a" /></svg>
        <svg className="ml-[7px] self-end" width="12" height="12" viewBox="0 0 12 12" stroke="#aaa"><path d="M12 0L0 12M12 4l-8 8M12 8l-4 4" /></svg>
      </div>
    </div>
  );
}

export default function App() {
  return (
    <div className="relative w-[1482px] h-[942px] overflow-hidden flex flex-col bg-[#e3e4e6] [font-family:'Noto_Sans','Noto_Sans_CJK_SC',sans-serif]">
      <TopBars />
      <div className="flex-1 flex min-h-0 border-b border-[#6e6e6e]">
        <Library />
        <div className="flex-1 flex flex-col min-w-0 border-l border-[#8b8d92]">
          <Tabs />
          <GnomeBar />
          <div className="flex-1 flex min-h-0">
            <Dock />
            <Sidebar />
            <MainDim />
          </div>
        </div>
      </div>
      <StatusBar />
      <Dialog />
      <div className="absolute left-[1143px] top-[898px] text-[27px] leading-[36px] whitespace-nowrap text-[#ffffff99] tracking-[0.65px] [text-shadow:1px_1px_1px_rgba(90,90,90,0.55)] [font-family:'Liberation_Sans',sans-serif]">CSDN @weixin_42684175</div>
    </div>
  );
}
